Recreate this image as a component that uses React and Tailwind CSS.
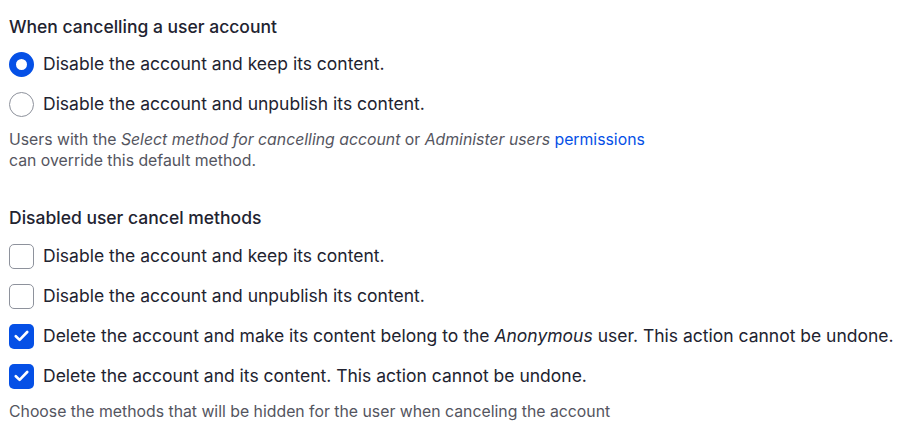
import React, { useState } from "react";

// Radio button (Gin / Claro look)
function Radio({ checked, label, onChange }) {
  return (
    <label className="flex h-10 cursor-pointer items-center gap-[9px]">
      <span
        className={`box-border block h-[25px] w-[25px] shrink-0 rounded-full bg-white ${
          checked ? "border-[7px] border-[#0550e6]" : "border border-[#8e929c]"
        }`}
      />
      <input type="radio" className="hidden" checked={checked} onChange={onChange} />
      <span className="text-[17.5px] text-[#222330]">{label}</span>
    </label>
  );
}

// Checkbox
function Checkbox({ checked, children, onChange }) {
  return (
    <label className="flex h-10 cursor-pointer items-center gap-[9px]">
      <span
        className={`box-border flex h-[25px] w-[25px] shrink-0 items-center justify-center rounded-[5px] ${
          checked ? "bg-[#0550e6]" : "border border-[#8e929c] bg-white"
        }`}
      >
        {checked && (
          <svg width="15" height="12" viewBox="0 0 15 12" fill="none">
            <path d="M1.8 6.2l3.8 3.7L13.2 2" stroke="white" strokeWidth="2.6" strokeLinecap="round" strokeLinejoin="round" />
          </svg>
        )}
      </span>
      <input type="checkbox" className="hidden" checked={checked} onChange={onChange} />
      <span className="text-[17.5px] text-[#222330]">{children}</span>
    </label>
  );
}

export default function App() {
  const [method, setMethod] = useState(0);
  const [disabled, setDisabled] = useState([false, false, true, true]);

  const toggle = (i) => setDisabled(disabled.map((v, j) => (j === i ? !v : v)));

  return (
    <div className="min-h-screen bg-white px-[9px] pt-[15px] font-['Inter',sans-serif] text-[#222330]">
      {/* When cancelling */}
      <div className="text-[17.5px] font-medium leading-6">When cancelling a user account</div>
      <div className="mt-[5px] flex flex-col">
        <Radio checked={method === 0} onChange={() => setMethod(0)} label="Disable the account and keep its content." />
        <Radio checked={method === 1} onChange={() => setMethod(1)} label="Disable the account and unpublish its content." />
      </div>
      <p className="mt-[5px] text-[15.8px] leading-[21px] text-[#545560]">
        Users with the <em>Select method for cancelling account</em> or <em>Administer users</em>{" "}
        <a href="#" className="text-[#0550e6]">permissions</a>
        <br />
        can override this default method.
      </p>

      {/* Disabled methods */}
      <div className="mt-[35px] text-[17.5px] font-medium leading-6">Disabled user cancel methods</div>
      <div className="mt-[6px] flex flex-col">
        <Checkbox checked={disabled[0]} onChange={() => toggle(0)}>Disable the account and keep its content.</Checkbox>
        <Checkbox checked={disabled[1]} onChange={() => toggle(1)}>Disable the account and unpublish its content.</Checkbox>
        <Checkbox checked={disabled[2]} onChange={() => toggle(2)}>
          Delete the account and make its content belong to the <em>Anonymous</em> user. This action cannot be undone.
        </Checkbox>
        <Checkbox checked={disabled[3]} onChange={() => toggle(3)}>Delete the account and its content. This action cannot be undone.</Checkbox>
      </div>
      <p className="mt-[5px] text-[15.8px] leading-[21px] text-[#545560]">
        Choose the methods that will be hidden for the user when canceling the account
      </p>
    </div>
  );
}
